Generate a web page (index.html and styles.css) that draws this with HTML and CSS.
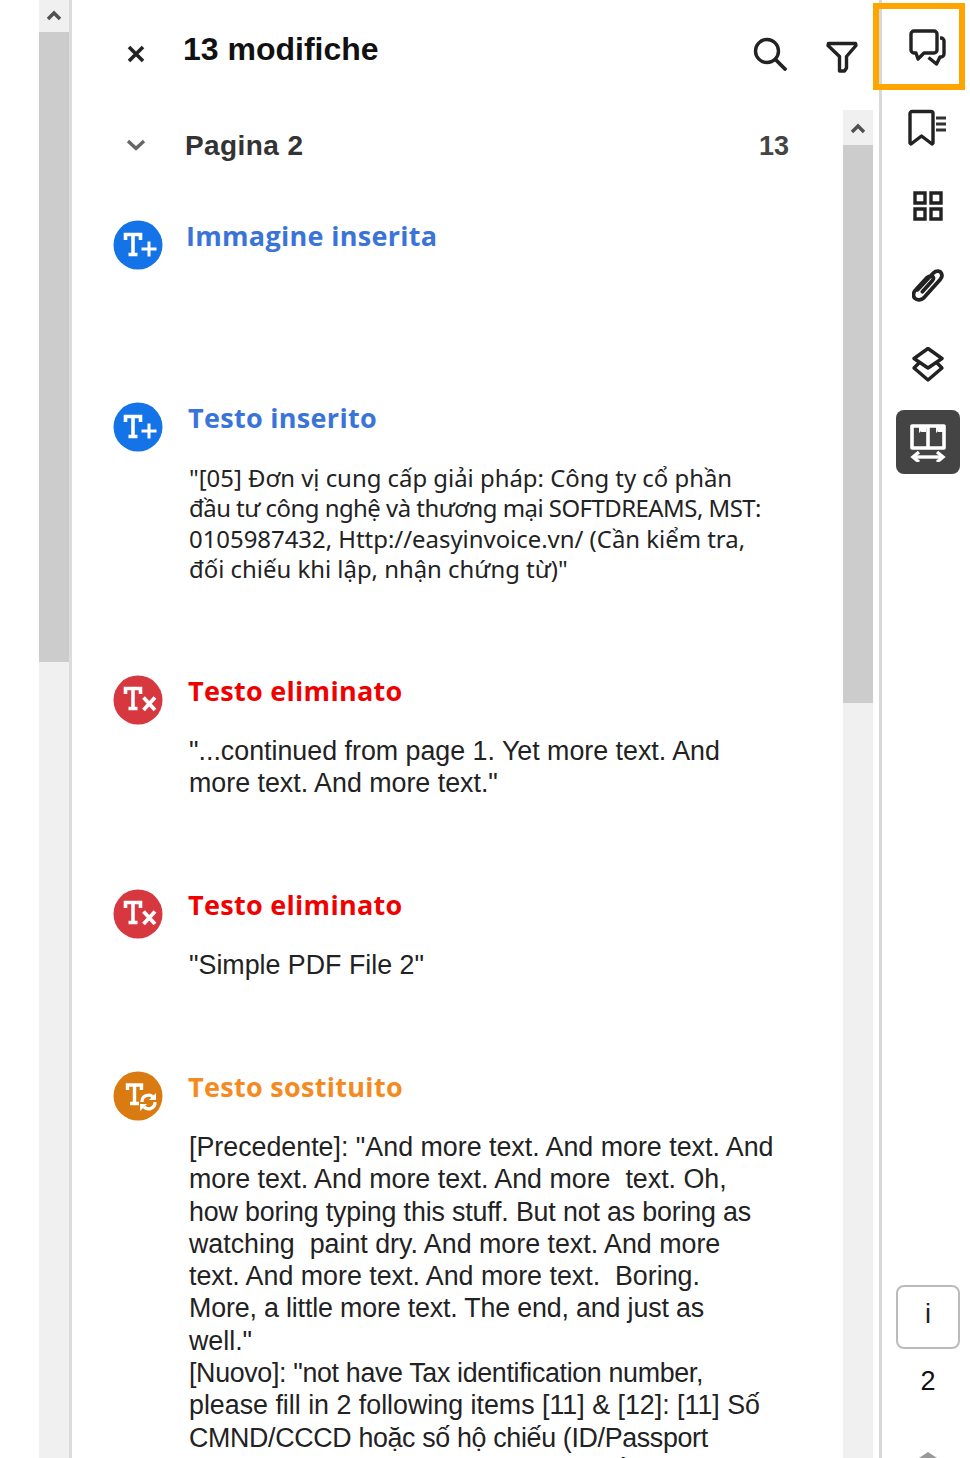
FILE: index.html
```html
<!DOCTYPE html>
<html lang="it">
<head>
<meta charset="utf-8">
<title>13 modifiche</title>
<link rel="stylesheet" href="styles.css">
</head>
<body>
<div class="app">
  <div class="gutter"></div>
  <div class="scrollbar outer">
    <div class="sb-btn outer-btn"><svg width="16" height="12" viewBox="0 0 16 12"><path d="M2 10 8 4l6 6" fill="none" stroke="#505050" stroke-width="3.400"/></svg></div>
    <div class="sb-thumb outer-thumb"></div>
  </div>
  <main class="panel">
    <header class="head">
      <svg class="close" width="18" height="18" viewBox="0 0 18 18"><path d="M2 2 16 16M16 2 2 16" stroke="#222" stroke-width="3.600" fill="none"/></svg>
      <h1 class="title">13 modifiche</h1>
      <svg class="search" width="34" height="34" viewBox="0 0 34 34"><circle cx="14" cy="14" r="11.500" fill="none" stroke="#222" stroke-width="3.400"/><path d="M22.500 22.500 32 32" stroke="#222" stroke-width="3.800" stroke-linecap="round"/></svg>
      <svg class="filter" width="32" height="34" viewBox="0 0 32 34"><path d="M2.500 3.500h27l.5 2-9.500 11V28l-2 3h-5V16.500L2 5.500z" fill="none" stroke="#222" stroke-width="3.400" stroke-linejoin="round"/></svg>
    </header>
    <div class="body">
      <div class="list">
        <div class="page-row">
          <svg class="chev" width="20" height="12" viewBox="0 0 20 12"><path d="M2 2l8 7.500L18 2" fill="none" stroke="#666" stroke-width="3.400"/></svg>
          <span class="page-name">Pagina 2</span>
          <span class="page-count">13</span>
        </div>

        <section class="item i-img">
          <svg class="badge" viewBox="0 0 50 50"><circle cx="25" cy="25" r="24.500" fill="#1473e6"/><path d="M12.500 20v-5.500h15V20M20 14.500V34M15.500 34.500h9" fill="none" stroke="#fff" stroke-width="3.600"/><path d="M36 21.500v15M28.500 29h15" stroke="#fff" stroke-width="3"/></svg>
          <div class="content"><h2 class="label blue shift">Immagine inserita</h2></div>
        </section>

        <section class="item i-ins">
          <svg class="badge" viewBox="0 0 50 50"><circle cx="25" cy="25" r="24.500" fill="#1473e6"/><path d="M12.500 20v-5.500h15V20M20 14.500V34M15.500 34.500h9" fill="none" stroke="#fff" stroke-width="3.600"/><path d="M36 21.500v15M28.500 29h15" stroke="#fff" stroke-width="3"/></svg>
          <div class="content">
            <h2 class="label blue">Testo inserito</h2>
            <p class="txt vn">"[05] Đơn vị cung cấp giải pháp: Công ty cổ phần<br><span class="narrow-vn">đầu tư công nghệ và thương mại SOFTDREAMS, MST:</span><br>0105987432, Http://easyinvoice.vn/ (Cần kiểm tra,<br>đối chiếu khi lập, nhận chứng từ)"</p>
          </div>
        </section>

        <section class="item i-del1">
          <svg class="badge" viewBox="0 0 50 50"><circle cx="25" cy="25" r="24.500" fill="#d7373f"/><path d="M12.500 19v-5.500h15V19M20 13.500V33M15.500 33.500h9" fill="none" stroke="#fff" stroke-width="3.600"/><path d="M30.500 22.500 42 35M42 22.500 30.500 35" stroke="#fff" stroke-width="3.800"/></svg>
          <div class="content">
            <h2 class="label red">Testo eliminato</h2>
            <p class="txt ar">"...continued from page 1. Yet more text. And<br>more text. And more text."</p>
          </div>
        </section>

        <section class="item i-del2">
          <svg class="badge" viewBox="0 0 50 50"><circle cx="25" cy="25" r="24.500" fill="#d7373f"/><path d="M12.500 19v-5.500h15V19M20 13.500V33M15.500 33.500h9" fill="none" stroke="#fff" stroke-width="3.600"/><path d="M30.500 22.500 42 35M42 22.500 30.500 35" stroke="#fff" stroke-width="3.800"/></svg>
          <div class="content">
            <h2 class="label red">Testo eliminato</h2>
            <p class="txt ar">"Simple PDF File 2"</p>
          </div>
        </section>

        <section class="item i-rep">
          <svg class="badge" viewBox="0 0 50 50"><circle cx="25" cy="25" r="24.500" fill="#da7b11"/><path d="M14.500 19v-5h14v5M21.500 14V32M17 32.500h9" fill="none" stroke="#fff" stroke-width="3.400"/><path d="M29 31a6.500 6.500 0 0 1 11-5M42 31a6.500 6.500 0 0 1-11 5" fill="none" stroke="#fff" stroke-width="3.200"/><path d="M43 22v7h-7zM27 40v-7h7z" fill="#fff"/></svg>
          <div class="content">
            <h2 class="label orange">Testo sostituito</h2>
            <p class="txt ar">[Precedente]: "And more text. And more text. And<br>more text. And more text. And more&nbsp; text. Oh,<br><span class="ls-a">how boring typing this stuff. But not as boring as</span><br>watching&nbsp; paint dry. And more text. And more<br>text. And more text. And more text.&nbsp; Boring.<br><span class="ls-a">More, a little more text. The end, and just as</span><br>well."<br><span class="ls-b">[Nuovo]: "not have Tax identification number,</span><br>please fill in 2 following items [11] &amp; [12]: [11] Số<br><span class="ls-b">CMND/CCCD hoặc số hộ chiếu (ID/Passport</span><br>Number): 026189004387 012044 Đối với</p>
          </div>
        </section>
      </div>
      <div class="scrollbar inner">
        <div class="sb-btn inner-btn"><svg width="16" height="12" viewBox="0 0 16 12"><path d="M2 10 8 4l6 6" fill="none" stroke="#505050" stroke-width="3.400"/></svg></div>
        <div class="sb-thumb inner-thumb"></div>
      </div>
    </div>
  </main>
  <nav class="rail">
    <div class="tool t-comments">
      <svg width="40" height="40" viewBox="0 0 40 40"><path d="M6 3h20a3 3 0 0 1 3 3v16a3 3 0 0 1-3 3H16l-6 6-2-6H6a3 3 0 0 1-3-3V6a3 3 0 0 1 3-3z" fill="none" stroke="#222" stroke-width="3.400" stroke-linejoin="round"/><path d="M32 10h1a3 3 0 0 1 3 3v13a3 3 0 0 1-3 3h-1l-3.500 7-8-6.500" fill="none" stroke="#222" stroke-width="3.400" stroke-linejoin="round"/></svg>
    </div>
    <div class="tool t-bookmarks">
      <svg width="40" height="38" viewBox="0 0 40 38"><path d="M4 2.500h19a2 2 0 0 1 2 2V34l-1 1-10.500-8L3 35l-1-1V4.500a2 2 0 0 1 2-2z" fill="none" stroke="#222" stroke-width="3.400" stroke-linejoin="round"/><path d="M28 9h10M28 15h10M28 21h10" stroke="#333" stroke-width="3"/></svg>
    </div>
    <div class="tool t-thumbs">
      <svg width="30" height="30" viewBox="0 0 30 30"><path d="M2 2h10v10H2zM18 2h10v10H18zM2 18h10v10H2zM18 18h10v10H18z" fill="none" stroke="#222" stroke-width="3.400"/></svg>
    </div>
    <div class="tool t-clip">
      <svg width="32" height="36" viewBox="0 0 34 36"><path d="M6 22 23 4c3-3 7-2 8 0s1 5-1 7L14 29c-4 5-9 4-11 2s-2-6 1-9l12-13c2-2 5-2 6-1s1 3-1 5L11 24" fill="none" stroke="#222" stroke-width="4" stroke-linejoin="round" stroke-linecap="round"/></svg>
    </div>
    <div class="tool t-layers">
      <svg width="34" height="36" viewBox="0 0 34 36"><path d="M17 1.500 31 11.500 17 21 3 11.500z" fill="none" stroke="#222" stroke-width="3.400" stroke-linejoin="round"/><path d="M8 16 3 21l14 12 14-12-5-5" fill="none" stroke="#222" stroke-width="3.400" stroke-linejoin="round"/></svg>
    </div>
    <div class="tool t-compare">
      <svg width="40" height="40" viewBox="0 0 40 40"><path d="M4 4h32v22H4zM20 4v22" fill="none" stroke="#fff" stroke-width="3.600" stroke-linejoin="round"/><path d="M11 4h7l-7 7zM28 4h7l-7 7z" fill="#fff"/><path d="M13 4h5v6h-5zM30 4h5v6h-5z" fill="#fff"/><path d="M6 35h28" stroke="#fff" stroke-width="3.400"/><path d="M11 30 5 35l6 5M29 30l6 5-6 5" fill="none" stroke="#fff" stroke-width="3.400"/></svg>
    </div>
    <div class="rail-spacer"></div>
    <div class="info">i</div>
    <div class="page-no">2</div>
    <div class="rail-arrow"></div>
  </nav>
</div>
<div class="focus"></div>
</body>
</html>
```
FILE: styles.css
```css
html, body {
  margin: 0;
  padding: 0;
  background: #fff;
  height: 1458px;
  overflow: hidden;
}
.app {
  display: flex;
  height: 1458px;
  width: 970px;
  font-family: "Liberation Sans", Arial, sans-serif;
  color: #222;
}
.gutter { width: 39px; flex: none; }
.scrollbar {
  width: 30px;
  flex: none;
  background: #f0f0f0;
  display: flex;
  flex-direction: column;
}
.sb-btn {
  display: flex;
  align-items: center;
  justify-content: center;
}
.outer-btn { height: 32px; padding-bottom: 3px; box-sizing: border-box; }
.inner-btn { height: 35px; }
.outer-thumb { height: 630px; background: #ccc; }
.inner-thumb { height: 558px; background: #ccc; }

.panel {
  width: 813px;
  flex: none;
  border-left: 3px solid #dcdcdc;
  border-right: 3px solid #d8d8d8;
  box-sizing: border-box;
  display: flex;
  flex-direction: column;
  height: 1458px;
}
.head {
  height: 110px;
  flex: none;
  display: flex;
  align-items: flex-start;
  box-sizing: border-box;
}
.close { margin: 45px 0 0 55px; flex: none; }
.title {
  margin: 30px 0 0 38px;
  font-size: 32px;
  line-height: 38px;
  font-weight: 700;
  color: #111;
  width: 571px;
  flex: none;
  white-space: nowrap;
}
.search { margin: 37px 0 0 -1px; flex: none; }
.filter { margin: 40px 0 0 39px; flex: none; }

.body { flex: 1; display: flex; min-height: 0; padding-right: 6px; }
.list { flex: 1; min-width: 0; overflow: hidden; }
.page-row {
  height: 110px;
  display: flex;
  align-items: flex-start;
  font-size: 28px;
  font-weight: 700;
  color: #333;
}
.chev { margin: 29px 0 0 54px; flex: none; }
.page-name { margin: 19px 0 0 39px; line-height: 34px; width: 574px; flex: none; letter-spacing: 0.4px; }
.page-count { margin-top: 19px; line-height: 34px; font-size: 27px; color: #444; }

.item {
  display: grid;
  grid-template-columns: 50px 1fr;
  column-gap: 26px;
  padding-left: 41px;
  box-sizing: border-box;
}
.i-img { height: 182px; }
.i-ins { height: 273px; }
.i-del1 { height: 214px; }
.i-del2 { height: 182px; }
.badge { width: 50px; height: 50px; display: block; }
.content { min-width: 0; }
.label {
  margin: 0 0 0 -1px;
  font-family: "Open Sans", "Noto Sans", sans-serif;
  font-size: 27px;
  line-height: 32px;
  font-weight: 700;
  letter-spacing: 0.3px;
  white-space: nowrap;
}
.shift { margin-left: -3px; }
.blue { color: #3b74d8; }
.red { color: #f00000; }
.orange { color: #f58a1f; }
.txt {
  margin: 28px 0 0;
  white-space: nowrap;
  color: #222;
}
.ar {
  font-family: "Liberation Sans", Arial, "Noto Sans", sans-serif;
  font-size: 26.800px;
  line-height: 32.300px;
}
.vn {
  font-family: "Noto Sans", "Open Sans", sans-serif;
  font-size: 23.900px;
  line-height: 30.300px;
  margin-top: 29px;
}
.narrow-vn { letter-spacing: -0.5px; }
.ls-a { letter-spacing: -0.16px; }
.ls-b { letter-spacing: -0.33px; }

.rail {
  flex: 1;
  display: flex;
  flex-direction: column;
  align-items: center;
  height: 1458px;
  padding-left: 4px;
  box-sizing: border-box;
  min-width: 0;
}
.tool {
  flex: none;
  display: flex;
  align-items: center;
  justify-content: center;
  width: 64px;
  box-sizing: border-box;
}
.t-comments { height: 90px; padding-top: 6px; }
.t-bookmarks { height: 76px; }
.t-thumbs { height: 80px; }
.t-clip { height: 79px; }
.t-layers { height: 79px; }
.t-compare {
  height: 64px;
  margin-top: 6px;
  background: #444;
  border-radius: 8px;
}
.rail-spacer { flex: 1; }
.info {
  width: 64px;
  height: 64px;
  box-sizing: border-box;
  flex: none;
  border: 2px solid #bbb;
  border-radius: 8px;
  padding-bottom: 6px;
  display: flex;
  align-items: center;
  justify-content: center;
  font-size: 27px;
  color: #222;
}
.page-no {
  font-size: 27px;
  line-height: 32px;
  margin-top: 16px;
  color: #111;
}
.rail-arrow {
  width: 0;
  height: 0;
  margin-top: 55px;
  border-left: 9px solid transparent;
  border-right: 9px solid transparent;
  border-bottom: 6px solid #999;
  flex: none;
}
.focus {
  position: absolute;
  left: 873px;
  top: 3px;
  width: 92px;
  height: 87px;
  box-sizing: border-box;
  border: 6px solid #ffa500;
}
```
